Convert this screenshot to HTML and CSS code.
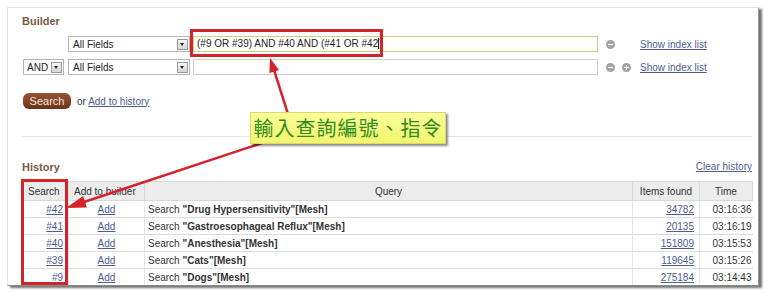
FILE: index.html
```html
<!DOCTYPE html>
<html>
<head>
<meta charset="utf-8">
<link rel="stylesheet" href="styles.css">
</head>
<body>
<div class="page">
  <div class="panel">
    <div class="title">Builder</div>
    <div class="rows">
      <div class="brow">
        <div class="slot-and"></div>
        <div class="sel sel-field"><span>All Fields</span><i class="dd"></i></div>
        <div class="inp inp-focus">(#9 OR #39) AND #40 AND (#41 OR #42<span class="caret"></span>)</div>
        <span class="ico minus"></span>
        <span class="ico-slot"></span>
        <a class="lnk idx" href="#">Show index list</a>
      </div>
      <div class="brow">
        <div class="sel sel-and"><span>AND</span><i class="dd"></i></div>
        <div class="sel sel-field"><span>All Fields</span><i class="dd"></i></div>
        <div class="inp"></div>
        <span class="ico minus"></span>
        <span class="ico plus"></span>
        <a class="lnk idx" href="#">Show index list</a>
      </div>
    </div>
    <div class="actions">
      <span class="btn">Search</span>
      <span class="or">or <a class="lnk" href="#">Add to history</a></span>
    </div>
    <div class="sep"></div>
    <div class="hhead">
      <div class="title">History</div>
      <a class="lnk" href="#">Clear history</a>
    </div>
    <table class="hist">
      <colgroup>
        <col class="w1"><col class="w2"><col class="w3"><col class="w4"><col class="w5">
      </colgroup>
      <thead>
        <tr><th class="c1">Search</th><th class="c2">Add to builder</th><th class="c3">Query</th><th class="c4">Items found</th><th class="c5">Time</th></tr>
      </thead>
      <tbody>
        <tr><td class="c1"><a class="lnk" href="#">#42</a></td><td class="c2"><a class="lnk" href="#">Add</a></td><td class="c3">Search <b>"Drug Hypersensitivity"[Mesh]</b></td><td class="c4"><a class="lnk" href="#">34782</a></td><td class="c5">03:16:36</td></tr>
        <tr><td class="c1"><a class="lnk" href="#">#41</a></td><td class="c2"><a class="lnk" href="#">Add</a></td><td class="c3">Search <b>"Gastroesophageal Reflux"[Mesh]</b></td><td class="c4"><a class="lnk" href="#">20135</a></td><td class="c5">03:16:19</td></tr>
        <tr><td class="c1"><a class="lnk" href="#">#40</a></td><td class="c2"><a class="lnk" href="#">Add</a></td><td class="c3">Search <b>"Anesthesia"[Mesh]</b></td><td class="c4"><a class="lnk" href="#">151809</a></td><td class="c5">03:15:53</td></tr>
        <tr><td class="c1"><a class="lnk" href="#">#39</a></td><td class="c2"><a class="lnk" href="#">Add</a></td><td class="c3">Search <b>"Cats"[Mesh]</b></td><td class="c4"><a class="lnk" href="#">119645</a></td><td class="c5">03:15:26</td></tr>
        <tr><td class="c1"><a class="lnk" href="#">#9</a></td><td class="c2"><a class="lnk" href="#">Add</a></td><td class="c3">Search <b>"Dogs"[Mesh]</b></td><td class="c4"><a class="lnk" href="#">275184</a></td><td class="c5">03:14:43</td></tr>
      </tbody>
    </table>
  </div>

  <svg class="marks" width="768" height="292" viewBox="0 0 768 292" xmlns="http://www.w3.org/2000/svg">
    <rect x="191.5" y="30.5" width="190" height="25" fill="none" stroke="#d3232b" stroke-width="3"/>
    <rect x="22.5" y="180.5" width="44" height="103" fill="none" stroke="#d3232b" stroke-width="3"/>
    <line x1="288" y1="114" x2="274" y2="70" stroke="#d3232b" stroke-width="2.5"/>
    <polygon points="270,58 279,70 269.4,72.9" fill="#d3232b"/>
    <line x1="262" y1="143" x2="84" y2="202" stroke="#d3232b" stroke-width="2.5"/>
    <polygon points="66,208 86.9,207.4 83.1,196" fill="#d3232b"/>
  </svg>
  <div class="callout">輸入查詢編號、指令</div>
</div>
</body>
</html>
```

FILE: styles.css
```css
html, body {
  margin: 0;
  padding: 0;
  background: #ffffff;
}

body {
  font-family: "Liberation Sans", Arial, sans-serif;
  font-size: 10px;
  color: #333333;
}

.page {
  position: relative;
  width: 768px;
  height: 292px;
  padding: 7px 0 0 7px;
  box-sizing: border-box;
}

.panel {
  width: 752px;
  box-sizing: border-box;
  border: 1px solid #e2e2e2;
  border-right-color: #999;
  border-bottom-color: #8a8a8a;
  box-shadow: 3px 2px 2px rgba(0, 0, 0, 0.55);
  padding: 6px 6px 0 14px;
  background: #fff;
}

.title {
  font-size: 11px;
  font-weight: bold;
  color: #7b5b40;
  line-height: 14px;
  height: 14px;
}

.rows {
  margin-top: 8px;
  display: flex;
  flex-direction: column;
  gap: 7px;
  padding-left: 1px;
}

.brow {
  display: flex;
  align-items: center;
  height: 16px;
}

.slot-and {
  width: 41px;
  flex: none;
}

.sel {
  height: 16px;
  box-sizing: border-box;
  border: 1px solid #b5b5b5;
  background: #fff;
  display: flex;
  align-items: center;
  justify-content: space-between;
  padding: 0 1px 0 4px;
  font-size: 10px;
  color: #222;
  flex: none;
}

.sel-and {
  width: 41px;
  padding-left: 3px;
}

.sel-field {
  width: 122px;
  margin-left: 4px;
}

.dd {
  display: block;
  width: 11px;
  height: 11px;
  box-sizing: border-box;
  border: 1px solid #999;
  background: linear-gradient(#f4f4f4, #d6d6d6);
  position: relative;
}

.dd::after {
  content: "";
  position: absolute;
  left: 2px;
  top: 3px;
  border-left: 2.5px solid transparent;
  border-right: 2.5px solid transparent;
  border-top: 3px solid #222;
}

.inp {
  width: 405px;
  height: 16px;
  margin-left: 3px;
  box-sizing: border-box;
  border: 1px solid #cfcfcf;
  background: #fff;
  flex: none;
  line-height: 14px;
  padding-left: 3px;
  font-size: 10px;
  color: #222;
  white-space: nowrap;
}

.inp-focus {
  border-color: #d6c98a;
}

.caret {
  display: inline-block;
  width: 1px;
  height: 11px;
  background: #222;
  vertical-align: -2px;
}

.ico, .ico-slot {
  width: 9px;
  height: 9px;
  flex: none;
}

.ico {
  border-radius: 50%;
  background: #a3a3a3;
  position: relative;
}

.ico::before {
  content: "";
  position: absolute;
  left: 2px;
  top: 4px;
  width: 5px;
  height: 1px;
  background: #fff;
}

.plus::after {
  content: "";
  position: absolute;
  left: 4px;
  top: 2px;
  width: 1px;
  height: 5px;
  background: #fff;
}

.minus {
  margin-left: 8px;
}

.ico-slot, .plus {
  margin-left: 7px;
}

.idx {
  margin-left: 9px;
}

.lnk {
  color: #4f5c8e;
  text-decoration: underline;
}

.actions {
  margin-top: 18px;
  height: 16px;
  display: flex;
  align-items: center;
  padding-left: 1px;
}

.btn {
  display: inline-block;
  width: 48px;
  height: 16px;
  line-height: 16px;
  text-align: center;
  border-radius: 6px;
  background: linear-gradient(#955434, #6d3419);
  color: #f3e6dc;
  font-size: 11px;
}

.or {
  margin-left: 6px;
  color: #333;
}

.sep {
  margin-top: 27px;
  height: 1px;
  background: #e4e4e4;
}

.hhead {
  margin-top: 23px;
  display: flex;
  justify-content: space-between;
  align-items: flex-end;
  height: 14px;
  line-height: 14px;
}

.hhead .lnk {
  line-height: 14px;
  margin-top: 2px;
}

.hist {
  margin-top: 7px;
  width: 730px;
  border-collapse: collapse;
  table-layout: fixed;
  font-size: 10px;
  color: #333;
}

.w1 { width: 46px; }
.w2 { width: 76px; }
.w3 { width: 488px; }
.w4 { width: 67px; }
.w5 { width: 53px; }

.hist th {
  height: 18px;
  padding: 0;
  background: #ececec;
  border: 1px solid #d8d8d8;
  font-weight: normal;
  color: #333;
  white-space: nowrap;
  overflow: hidden;
}

.hist td {
  height: 16px;
  padding: 0;
  border-top: 1px solid #dcdcdc;
  border-left: 1px solid #e4e4e4;
  white-space: nowrap;
}

.hist tr td:first-child {
  border-left: none;
}

.hist th.c1 { text-align: left; padding-left: 5px; }
.hist th.c2 { text-align: left; padding-left: 5px; }
.hist th.c3 { text-align: center; }
.hist th.c4 { text-align: center; }
.hist th.c5 { text-align: center; }

.hist td.c1 { text-align: right; padding-right: 5px; }
.hist td.c2 { text-align: center; }
.hist td.c3 { text-align: left; padding-left: 3px; }
.hist td.c4 { text-align: right; padding-right: 5px; }
.hist td.c5 { text-align: right; padding-right: 1px; }

.marks {
  position: absolute;
  left: 0;
  top: 0;
  pointer-events: none;
}

.callout {
  position: absolute;
  left: 250px;
  top: 112px;
  width: 196px;
  height: 32px;
  box-sizing: border-box;
  background: linear-gradient(#fbfd9a, #f2f56c);
  border: 1px solid #dcd86a;
  box-shadow: 2px 2px 2px rgba(0, 0, 0, 0.45);
  color: #2f8c1f;
  font-family: "Noto Sans CJK TC", "Noto Sans CJK SC", sans-serif;
  font-size: 20px;
  line-height: 30px;
  letter-spacing: 1px;
  text-align: center;
  white-space: nowrap;
}
```
